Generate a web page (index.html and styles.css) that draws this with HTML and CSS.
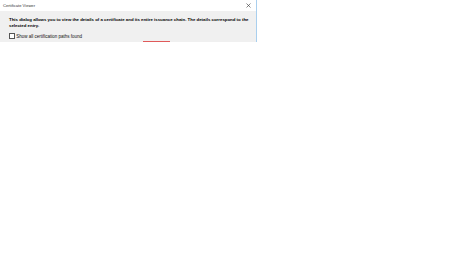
FILE: index.html
```
<!DOCTYPE html>
<html>
<head>
<meta charset="utf-8">
<link rel="stylesheet" href="styles.css">
</head>
<body>
<div class="window">
  <div class="titlebar">
    <span class="title">Certificate Viewer</span>
    <svg class="close" width="5" height="5" viewBox="0 0 10 10"><path d="M1 1L9 9M9 1L1 9" stroke="#333" stroke-width="1.2"/></svg>
  </div>
  <div class="content">
    <p class="intro">This dialog allows you to view the details of a certificate and its entire issuance chain. The details correspond to the selected entry.</p>
    <label class="check"><span class="box"></span>Show all certification paths found</label>
    <div class="redline"></div>
  </div>
</div>
</body>
</html>
```
FILE: styles.css
```
html, body {
  margin: 0;
  padding: 0;
  background: #ffffff;
  font-family: "Liberation Sans", Arial, sans-serif;
}
.window {
  width: 256px;
  border-right: 1px solid #a9cfee;
  display: flex;
  flex-direction: column;
}
.titlebar {
  height: 11px;
  display: flex;
  align-items: center;
  justify-content: space-between;
  padding: 0 5px 0 3px;
  background: #ffffff;
}
.title {
  font-size: 4.1px;
  color: #333;
}
.close {
  display: block;
}
.content {
  background: #f0f0f0;
  height: 31px;
  box-sizing: border-box;
  padding: 6px 0 0 9px;
  display: flex;
  flex-direction: column;
}
.intro {
  margin: 0;
  font-size: 4.35px;
  font-weight: bold;
  line-height: 6px;
  color: #000;
  width: 244px;
}
.check {
  margin-top: 4px;
  display: flex;
  align-items: center;
  font-size: 4.5px;
  color: #111;
  height: 6px;
}
.box {
  width: 4px;
  height: 4px;
  border: 0.6px solid #555;
  background: #fff;
  margin-right: 1.2px;
}
.redline {
  margin-top: auto;
  margin-left: 134px;
  width: 27px;
  height: 1px;
  background: #e05a5a;
}
```
